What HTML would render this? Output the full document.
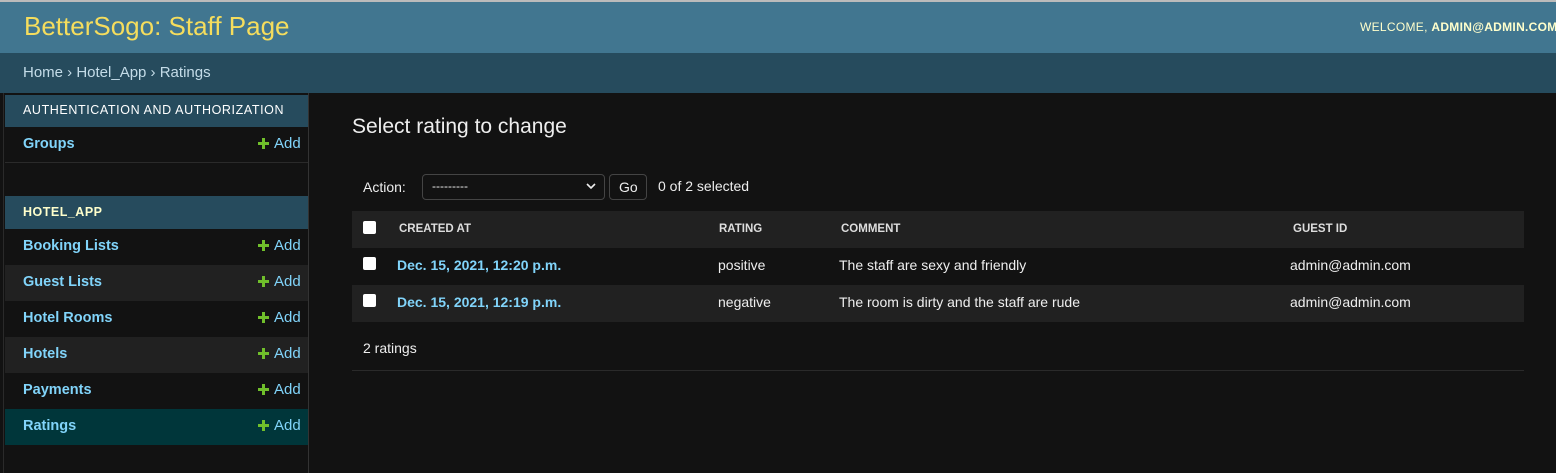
<!DOCTYPE html>
<html><head><style>
*{box-sizing:border-box;margin:0;padding:0}
body{width:1556px;height:473px;overflow:hidden;background:#121212;font-family:"Liberation Sans",sans-serif;font-size:14px;color:#eee;position:relative}
.a{position:absolute;white-space:nowrap}
a{color:#81d4fa;text-decoration:none}
.cb{position:absolute;width:13px;height:13px;background:#fff;border-radius:2px}
.row{position:absolute;left:5px;width:303px;height:36px}
.row .n{position:absolute;left:18px;top:9px;font-weight:bold;color:#81d4fa;font-size:14.5px}
.row .add{position:absolute;left:269px;top:8px;color:#81d4fa;font-size:15px}
.row svg{position:absolute;left:253px;top:11px}
</style></head><body>
<div class="a" style="left:0;top:0;width:1556px;height:2px;background:#bbb"></div>
<div class="a" style="left:0;top:2px;width:1556px;height:51px;background:#417690"></div>
<div class="a" style="left:24px;top:11px;font-size:26px;color:#f5dd5d">BetterSogo: Staff Page</div>
<div class="a" style="left:1360px;top:20px;font-size:12px;color:#ffc;letter-spacing:0.3px">WELCOME, <b>ADMIN@ADMIN.COM.</b></div>
<div class="a" style="left:0;top:53px;width:1556px;height:40px;background:#264b5d"></div>
<div class="a" style="left:23px;top:64px;font-size:15px;color:#c4dce8">Home › Hotel_App › Ratings</div>

<div class="a" style="left:3px;top:93px;width:1px;height:380px;background:#2a2a2a"></div>
<div class="a" style="left:308px;top:93px;width:1px;height:380px;background:#333"></div>

<div class="a" style="left:5px;top:95px;width:303px;height:32px;background:#264b5d"></div>
<div class="a" style="left:23px;top:103px;font-size:12.5px;color:#fff;letter-spacing:0.6px">AUTHENTICATION AND AUTHORIZATION</div>
<div class="row" style="top:127px;border-bottom:1px solid #2a2a2a"><span class="n">Groups</span><svg width="11" height="11"><path d="M5.5 0v11M0 5.5h11" stroke="#70bf2b" stroke-width="3"/></svg><span class="add">Add</span></div>

<div class="a" style="left:5px;top:196px;width:303px;height:33px;background:#264b5d"></div>
<div class="a" style="left:23px;top:205px;font-size:12.5px;font-weight:bold;color:#ffc;letter-spacing:0.5px">HOTEL_APP</div>
<div class="row" style="top:229px;background:#121212"><span class="n">Booking Lists</span><svg width="11" height="11"><path d="M5.5 0v11M0 5.5h11" stroke="#70bf2b" stroke-width="3"/></svg><span class="add">Add</span></div>
<div class="row" style="top:265px;background:#212121"><span class="n">Guest Lists</span><svg width="11" height="11"><path d="M5.5 0v11M0 5.5h11" stroke="#70bf2b" stroke-width="3"/></svg><span class="add">Add</span></div>
<div class="row" style="top:301px;background:#121212"><span class="n">Hotel Rooms</span><svg width="11" height="11"><path d="M5.5 0v11M0 5.5h11" stroke="#70bf2b" stroke-width="3"/></svg><span class="add">Add</span></div>
<div class="row" style="top:337px;background:#212121"><span class="n">Hotels</span><svg width="11" height="11"><path d="M5.5 0v11M0 5.5h11" stroke="#70bf2b" stroke-width="3"/></svg><span class="add">Add</span></div>
<div class="row" style="top:373px;background:#121212"><span class="n">Payments</span><svg width="11" height="11"><path d="M5.5 0v11M0 5.5h11" stroke="#70bf2b" stroke-width="3"/></svg><span class="add">Add</span></div>
<div class="row" style="top:409px;background:#00363a"><span class="n">Ratings</span><svg width="11" height="11"><path d="M5.5 0v11M0 5.5h11" stroke="#70bf2b" stroke-width="3"/></svg><span class="add">Add</span></div>

<div class="a" style="left:352px;top:115px;font-size:21px;color:#eee;font-weight:300">Select rating to change</div>
<div class="a" style="left:363px;top:179px;color:#eee">Action:</div>
<div class="a" style="left:422px;top:174px;width:183px;height:26px;border:1px solid #444;border-radius:4px;background:#121212"></div>
<div class="a" style="left:432px;top:179px;font-size:12px">---------</div>
<svg class="a" style="left:586px;top:183px" width="10" height="7"><path d="M1 1l4 4 4-4" stroke="#eee" stroke-width="1.6" fill="none"/></svg>
<div class="a" style="left:609px;top:174px;width:38px;height:26px;border:1px solid #444;border-radius:4px;background:#121212"></div>
<div class="a" style="left:619px;top:179px">Go</div>
<div class="a" style="left:658px;top:178px">0 of 2 selected</div>

<div class="a" style="left:352px;top:211px;width:1172px;height:37px;background:#212121"></div>
<div class="cb" style="left:363px;top:221px"></div>
<div class="a" style="left:399px;top:223px;font-size:11.5px;font-weight:bold;color:#ddd">CREATED AT</div>
<div class="a" style="left:719px;top:223px;font-size:11.5px;font-weight:bold;color:#ddd">RATING</div>
<div class="a" style="left:841px;top:223px;font-size:11.5px;font-weight:bold;color:#ddd">COMMENT</div>
<div class="a" style="left:1293px;top:223px;font-size:11.5px;font-weight:bold;color:#ddd">GUEST ID</div>

<div class="cb" style="left:363px;top:257px"></div>
<div class="a" style="left:397px;top:257px;font-weight:bold"><a>Dec. 15, 2021, 12:20 p.m.</a></div>
<div class="a" style="left:718px;top:257px">positive</div>
<div class="a" style="left:839px;top:257px">The staff are sexy and friendly</div>
<div class="a" style="left:1290px;top:257px">admin@admin.com</div>

<div class="a" style="left:352px;top:285px;width:1172px;height:37px;background:#212121"></div>
<div class="cb" style="left:363px;top:294px"></div>
<div class="a" style="left:397px;top:294px;font-weight:bold"><a>Dec. 15, 2021, 12:19 p.m.</a></div>
<div class="a" style="left:718px;top:294px">negative</div>
<div class="a" style="left:839px;top:294px">The room is dirty and the staff are rude</div>
<div class="a" style="left:1290px;top:294px">admin@admin.com</div>

<div class="a" style="left:363px;top:340px">2 ratings</div>
<div class="a" style="left:352px;top:370px;width:1172px;height:1px;background:#2a2a2a"></div>
</body></html>
